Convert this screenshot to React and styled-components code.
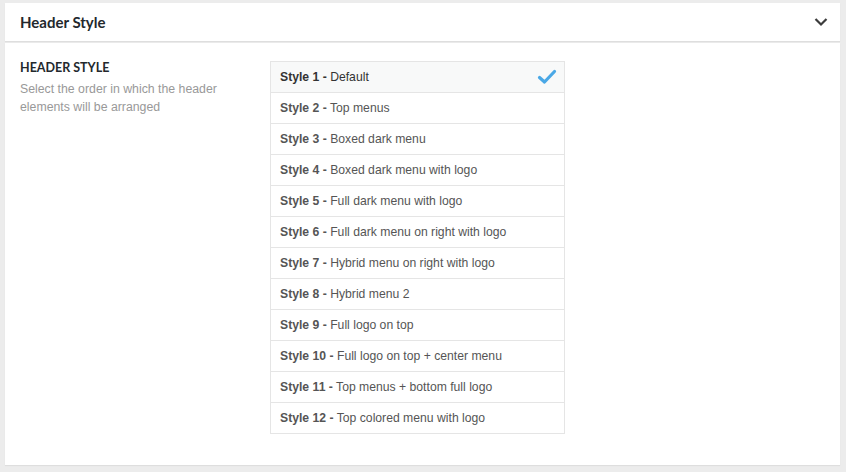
import React, { useState } from "react";
import styled, { createGlobalStyle } from "styled-components";

const GlobalStyle = createGlobalStyle`
  html, body {
    margin: 0;
    padding: 0;
    background: #ececec;
  }
  body {
    font-family: "Liberation Sans", Arial, sans-serif;
  }
`;

const styles = [
  "Default",
  "Top menus",
  "Boxed dark menu",
  "Boxed dark menu with logo",
  "Full dark menu with logo",
  "Full dark menu on right with logo",
  "Hybrid menu on right with logo",
  "Hybrid menu 2",
  "Full logo on top",
  "Full logo on top + center menu",
  "Top menus + bottom full logo",
  "Top colored menu with logo",
];

const Page = styled.div`
  padding: 3px 6px 7px 5px;
  display: flex;
  flex-direction: column;
  gap: 2px;
`;

const PanelHeader = styled.div`
  height: 38px;
  background: #fff;
  display: flex;
  align-items: center;
  justify-content: space-between;
  padding: 0 12px 0 15px;
  box-shadow: 0 1px 1px rgba(0, 0, 0, 0.06);
`;

const Title = styled.h3`
  margin: 0;
  font-family: Lato, "Open Sans", sans-serif;
  font-weight: 700;
  font-size: 15px;
  color: #23282d;
`;

const PanelBody = styled.div`
  background: #fff;
  min-height: 422px;
  box-sizing: border-box;
  padding: 18px 15px;
  display: flex;
  align-items: flex-start;
  box-shadow: 0 1px 1px rgba(0, 0, 0, 0.06);
`;

const Info = styled.div`
  width: 250px;
  flex: none;
`;

const Label = styled.div`
  font-family: Lato, "Open Sans", sans-serif;
  font-weight: 700;
  font-size: 12.5px;
  color: #23282d;
  text-transform: uppercase;
  margin-top: -1px;
  line-height: 16px;
`;

const Desc = styled.p`
  margin: 4px 0 0;
  font-size: 12.3px;
  line-height: 18px;
  color: #999;
  width: 210px;
`;

const List = styled.ul`
  list-style: none;
  margin: 0;
  padding: 0;
  box-sizing: border-box;
  width: 295px;
  border: 1px solid #e5e5e5;
  border-bottom: none;
`;

const Item = styled.li`
  height: 30px;
  border-bottom: 1px solid #e5e5e5;
  display: flex;
  align-items: center;
  justify-content: space-between;
  padding: 0 7px 0 9px;
  font-size: 12.2px;
  color: ${(p) => (p.$active ? "#333" : "#555")};
  background: ${(p) => (p.$active ? "#f8f9f9" : "#fff")};
  cursor: pointer;

  b {
    font-weight: 700;
  }
`;

const Check = () => (
  <svg width="20" height="16" viewBox="0 0 20 16">
    <path
      d="M2.5 8.5 L7.5 13 L17.5 2.5"
      fill="none"
      stroke="#4aa8e6"
      strokeWidth="3.2"
      strokeLinecap="round"
      strokeLinejoin="round"
    />
  </svg>
);

const Chevron = () => (
  <svg width="14" height="10" viewBox="0 0 14 10">
    <path
      d="M1.5 2 L7 7.5 L12.5 2"
      fill="none"
      stroke="#3c3c3c"
      strokeWidth="2.2"
    />
  </svg>
);

export default function App() {
  const [active, setActive] = useState(0);
  return (
    <>
      <GlobalStyle />
      <Page>
        <PanelHeader>
          <Title>Header Style</Title>
          <Chevron />
        </PanelHeader>
        <PanelBody>
          <Info>
            <Label>Header Style</Label>
            <Desc>Select the order in which the header elements will be arranged</Desc>
          </Info>
          <List>
            {styles.map((name, i) => (
              <Item key={i} $active={i === active} onClick={() => setActive(i)}>
                <span>
                  <b>Style {i + 1} -</b> {name}
                </span>
                {i === active && <Check />}
              </Item>
            ))}
          </List>
        </PanelBody>
      </Page>
    </>
  );
}
